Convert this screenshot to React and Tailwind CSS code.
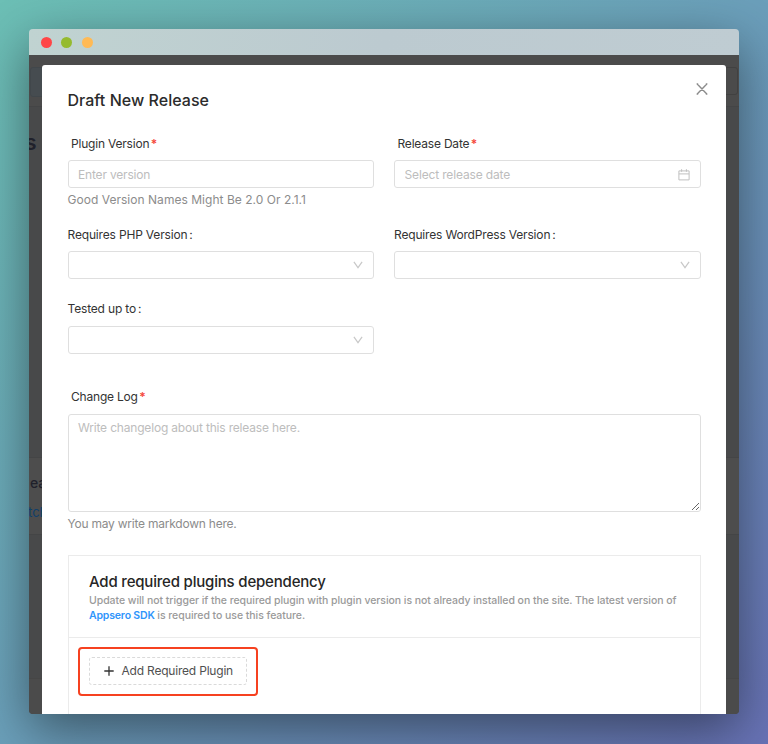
import React, { useState } from 'react';

const trafficLights = ['bg-[#ff4646]', 'bg-[#95bb2f]', 'bg-[#ffba55]'];

const inputClass =
  'block w-full rounded-[3px] border border-[#dfdfdf] bg-white text-[12px] tracking-[-0.18px] text-[#404040] placeholder:text-[#bdbdbd] outline-none';

const ChevronDown = () => (
  <svg width="10" height="8" viewBox="0 0 10 8" fill="none" stroke="#c8c8c8" strokeWidth="1.2">
    <path d="M0.9 0.8 L5 6.6 L9.1 0.8" />
  </svg>
);

const CalendarIcon = () => (
  <svg width="12" height="12" viewBox="0 0 12 12" fill="none" stroke="#c0c0c0" strokeWidth="1">
    <path d="M0.9 1.9 H11.1 V10.9 H0.9 Z M0.9 4.9 H11.1 M3.6 0.2 V2.8 M8.4 0.2 V2.8" />
  </svg>
);

const CloseIcon = () => (
  <svg width="12" height="12" viewBox="0 0 12 12" fill="none" stroke="#8c8c8c" strokeWidth="1.4">
    <path d="M1.2 0.9 L10.8 11.1 M10.8 0.9 L1.2 11.1 M0.6 0.9 H2.2 M9.8 0.9 H11.4 M0.6 11.1 H2.2 M9.8 11.1 H11.4" />
  </svg>
);

const RequiredLabel = ({ htmlFor, children }) => (
  <label htmlFor={htmlFor} className="flex h-5 items-center whitespace-nowrap pl-[3.5px] text-[12px] tracking-[-0.2px] text-[#333]">
    {children}
    <span className="ml-[1.5px] text-[12px] font-semibold leading-none text-[#f5473b]">*</span>
  </label>
);

const SelectField = ({ label }) => (
  <div>
    <div className="flex h-5 items-center whitespace-nowrap pt-px text-[12px] tracking-[-0.17px] text-[#333]">
      {label}
      <span className="ml-[2px]">:</span>
    </div>
    <button
      type="button"
      aria-label={label}
      className="mt-[7px] flex h-7 w-full items-center justify-end rounded-[3px] border border-[#dfdfdf] bg-white pr-[10px]"
    >
      <ChevronDown />
    </button>
  </div>
);

// Dimmed page behind the modal
const PageBehind = () => (
  <div className="h-full w-full overflow-hidden bg-[#48494a]">
    <div className="flex h-[52px] items-start justify-between border-b border-[#444546] bg-[#4b4b4b] pl-px pr-px pt-3">
      <div className="h-[30px] w-20 rounded-[3px] border border-[#41474b] bg-[#464c50]" />
      <div className="h-7 w-20 rounded-[3px] border border-[#414141]" />
    </div>
    <div className="flex h-[350px] items-start pt-[24px]">
      <span className="-ml-[4px] text-[21px] font-semibold leading-6 text-[#20212b]">s</span>
    </div>
    <div className="flex h-[78px] flex-col border-y border-[#444546] bg-[#4d4d4d] pt-[13px]">
      <span className="ml-px text-[14px] font-medium leading-6 text-[#20212b]">ea</span>
      <span className="-ml-px mt-[5px] text-[13px] leading-6 text-[#103f6b]">tch</span>
    </div>
    <div className="h-[143px]" />
    <div className="h-9 border-t border-[#464646] bg-[#4b4b4b]" />
  </div>
);

const ReleaseModal = ({ onAddPlugin }) => (
  <div className="absolute left-[13px] right-[13px] top-[10px] bottom-0 overflow-hidden rounded-t-[3px] bg-white pl-[25.5px] pr-[25.5px] pt-[18px]">
    {/* Header */}
    <div className="flex h-[34px] items-start justify-between">
      <h2 className="mt-[5px] whitespace-nowrap text-[16px] font-medium leading-6 tracking-[0.03px] text-[#2b2b2b]">
        Draft New Release
      </h2>
      <button type="button" aria-label="Close" className="mr-[-7.5px]">
        <CloseIcon />
      </button>
    </div>

    {/* Version and date */}
    <div className="mt-[17px] grid grid-cols-2 gap-x-5">
      <div>
        <RequiredLabel htmlFor="version">Plugin Version</RequiredLabel>
        <input id="version" className={`${inputClass} mt-[6px] h-7 px-[9.5px]`} placeholder="Enter version" />
        <p className="mt-[3px] whitespace-nowrap text-[12px] leading-[18px] tracking-[0.03px] text-[#8c8c8c]">
          Good Version Names Might Be 2.0 Or 2.1.1
        </p>
      </div>
      <div>
        <RequiredLabel htmlFor="date">Release Date</RequiredLabel>
        <div className="mt-[6px] flex h-7 items-center rounded-[3px] border border-[#dfdfdf] bg-white pl-[9.5px] pr-[10px] pt-px">
          <input
            id="date"
            className="min-w-0 flex-1 text-[12px] tracking-[-0.15px] text-[#404040] outline-none placeholder:text-[#bdbdbd]"
            placeholder="Select release date"
          />
          <CalendarIcon />
        </div>
      </div>
    </div>

    {/* Requirements */}
    <div className="mt-[15px] grid grid-cols-2 gap-x-5 gap-y-[19.5px]">
      <SelectField label="Requires PHP Version" />
      <SelectField label="Requires WordPress Version" />
      <SelectField label="Tested up to" />
    </div>

    {/* Changelog */}
    <div className="mt-[33.5px]">
      <RequiredLabel htmlFor="changelog">Change Log</RequiredLabel>
      <textarea
        id="changelog"
        className={`${inputClass} mt-[7px] h-[98px] resize-y px-[9.5px] py-1 leading-[18px]`}
        placeholder="Write changelog about this release here."
      />
      <p className="mt-[3px] whitespace-nowrap text-[12px] leading-[18px] tracking-[-0.23px] text-[#8c8c8c]">You may write markdown here.</p>
    </div>

    {/* Required plugins */}
    <div className="mt-[22px] h-[180px] border border-[#ebebeb]">
      <div className="h-[82px] border-b border-[#ebebeb] pl-[20.5px] pt-[15px]">
        <h3 className="whitespace-nowrap text-[15px] font-medium leading-[22px] tracking-[-0.19px] text-[#262626]">
          Add required plugins dependency
        </h3>
        <p className="whitespace-nowrap text-[10.5px] font-medium leading-[15px] tracking-[-0.055px] text-[#9a9a9a]">
          Update will not trigger if the required plugin with plugin version is not already installed on the site. The latest version of
          <br />
          <a href="#sdk" className="font-semibold tracking-[-0.17px] text-[#2f95fb]">Appsero SDK</a> is required to use this feature.
        </p>
      </div>
      <div className="ml-[9.5px] mt-[9px] flex h-[49px] w-[180px] items-center justify-center rounded-[4px] border-2 border-[#f64120]">
        <button
          type="button"
          onClick={onAddPlugin}
          className="mb-px flex h-7 w-[158px] items-center whitespace-nowrap rounded-[3px] border border-dashed border-[#dadada] pl-[14px] text-[12px] tracking-[-0.2px] text-[#505050]"
        >
          <svg width="10" height="10" viewBox="0 0 10 10" stroke="#333" strokeWidth="1.3">
            <path d="M5 0.3 V9.7 M0.3 5 H9.7" />
          </svg>
          <span className="ml-[7.5px]">Add Required Plugin</span>
        </button>
      </div>
    </div>
  </div>
);

const App = () => {
  const [, setPlugins] = useState([]);

  return (
    <div className="h-[744px] w-[768px] overflow-hidden bg-[linear-gradient(135deg,#6cbfb5_0%,#6b9fba_50%,#6872b6_100%)] px-[29px] pt-[29px] font-['Inter',sans-serif]">
      <div className="flex h-[685px] w-[710px] flex-col overflow-hidden rounded-[4px] shadow-[0_16px_52px_rgba(0,0,0,0.46)]">
        <div className="flex h-[26px] shrink-0 items-center gap-[9.5px] bg-[linear-gradient(100deg,#c0d3d1,#bccad0_50%,#bfccd2)] pl-[11.5px]">
          {trafficLights.map(color => (
            <span key={color} className={`h-[11px] w-[11px] rounded-full ${color}`} />
          ))}
        </div>
        <div className="relative h-[659px]">
          <PageBehind />
          <ReleaseModal onAddPlugin={() => setPlugins(list => [...list, {}])} />
        </div>
      </div>
    </div>
  );
};

export default App;
